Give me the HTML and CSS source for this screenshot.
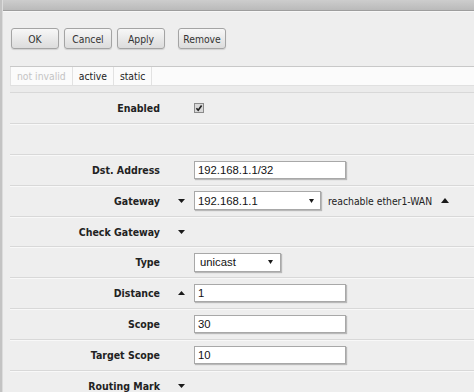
FILE: index.html
```html
<!DOCTYPE html>
<html>
<head>
<meta charset="utf-8">
<link rel="stylesheet" href="styles.css">
</head>
<body>
<div class="frame">
  <div class="edge"></div>
  <div class="main">
    <div class="topbar"></div>
    <div class="toolbar">
      <button class="btn">OK</button>
      <button class="btn">Cancel</button>
      <button class="btn">Apply</button>
      <button class="btn btn-sep">Remove</button>
    </div>
    <div class="form">
      <div class="tabs">
        <span class="tab dim">not invalid</span>
        <span class="tab">active</span>
        <span class="tab">static</span>
      </div>
      <div class="gap"></div>
      <div class="rows">
        <div class="row">
          <div class="label">Enabled</div>
          <div class="ctl"></div>
          <div class="field">
            <span class="checkbox"><svg width="10" height="10" viewBox="0 0 10 10"><rect x="0.5" y="0.5" width="9" height="9" fill="#d8d8d8" stroke="#8a8a8a"/><path d="M2.4 5.2 L4.2 7.2 L7.6 2.6" fill="none" stroke="#1e1e1e" stroke-width="1.6"/></svg></span>
          </div>
        </div>
        <div class="row"></div>
        <div class="row">
          <div class="label">Dst. Address</div>
          <div class="ctl"></div>
          <div class="field"><div class="input">192.168.1.1/32</div></div>
        </div>
        <div class="row">
          <div class="label">Gateway</div>
          <div class="ctl"><svg class="tri" width="7" height="4" viewBox="0 0 7 4"><polygon points="0,0 7,0 3.5,4" fill="#1a1a1a"/></svg></div>
          <div class="field">
            <div class="input select gw"><span>192.168.1.1</span><svg width="5" height="4" viewBox="0 0 5 4"><polygon points="0,0 5,0 2.5,4" fill="#1a1a1a"/></svg></div>
            <span class="status">reachable ether1-WAN</span>
            <svg class="tri up" width="8" height="5" viewBox="0 0 8 5"><polygon points="0,5 8,5 4,0" fill="#1a1a1a"/></svg>
          </div>
        </div>
        <div class="row">
          <div class="label">Check Gateway</div>
          <div class="ctl"><svg class="tri" width="7" height="4" viewBox="0 0 7 4"><polygon points="0,0 7,0 3.5,4" fill="#1a1a1a"/></svg></div>
          <div class="field"></div>
        </div>
        <div class="row">
          <div class="label">Type</div>
          <div class="ctl"></div>
          <div class="field">
            <div class="input select type"><span>unicast</span><svg width="5" height="4" viewBox="0 0 5 4"><polygon points="0,0 5,0 2.5,4" fill="#1a1a1a"/></svg></div>
          </div>
        </div>
        <div class="row">
          <div class="label">Distance</div>
          <div class="ctl"><svg class="tri" width="7" height="4" viewBox="0 0 7 4"><polygon points="0,4 7,4 3.5,0" fill="#1a1a1a"/></svg></div>
          <div class="field"><div class="input">1</div></div>
        </div>
        <div class="row">
          <div class="label">Scope</div>
          <div class="ctl"></div>
          <div class="field"><div class="input">30</div></div>
        </div>
        <div class="row">
          <div class="label">Target Scope</div>
          <div class="ctl"></div>
          <div class="field"><div class="input">10</div></div>
        </div>
        <div class="row">
          <div class="label">Routing Mark</div>
          <div class="ctl"><svg class="tri" width="7" height="4" viewBox="0 0 7 4"><polygon points="0,0 7,0 3.5,4" fill="#1a1a1a"/></svg></div>
          <div class="field"></div>
        </div>
      </div>
    </div>
  </div>
</div>
</body>
</html>
```

FILE: styles.css
```css
html, body {
  margin: 0;
  padding: 0;
}
body {
  width: 474px;
  height: 392px;
  overflow: hidden;
  background: #eeeeee;
  font-family: "DejaVu Sans Condensed", "DejaVu Sans", sans-serif;
  font-size: 10.3px;
  color: #222;
}
.frame {
  display: flex;
  height: 392px;
}
.edge {
  flex: none;
  width: 2px;
  background: #c3c3c3;
  border-right: 1px solid #dcdcdc;
}
.main {
  flex: 1;
  min-width: 0;
  display: flex;
  flex-direction: column;
}
.topbar {
  flex: none;
  height: 10px;
  background: linear-gradient(#cdcdcd, #bababa);
  border-bottom: 1px solid #9d9d9d;
}
.toolbar {
  flex: none;
  display: flex;
  gap: 5px;
  padding: 16px 8px 17px;
  border-top: 1px solid #f7f7f7;
}
.btn {
  width: 48px;
  height: 21px;
  padding: 0;
  border: 1px solid #a4a4a4;
  border-radius: 3px;
  background: linear-gradient(#f7f7f7, #dcdcdc);
  box-shadow: 0 1px 1px rgba(0, 0, 0, 0.12);
  font-family: "DejaVu Sans Condensed", "DejaVu Sans", sans-serif;
  font-size: 10.3px;
  color: #333;
}
.btn-sep {
  margin-left: 8px;
}
.form {
  margin-left: 7px;
}
.tabs {
  display: flex;
  height: 18px;
  background: #fbfbfb;
  border-top: 1px solid #c8c8c8;
  border-bottom: 1px solid #e0e0e0;
}
.tab {
  padding: 0 6px;
  line-height: 18px;
  border-left: 1px solid #e2e2e2;
  color: #222;
}
.tab:last-child {
  border-right: 1px solid #e2e2e2;
}
.tab.dim {
  color: #c4c4c4;
}
.gap {
  height: 6px;
  background: #ebebeb;
}
.rows {
  border-top: 1px solid #d8d8d8;
}
.row {
  display: flex;
  align-items: center;
  height: 29.9px;
  border-bottom: 1px solid #d8d8d8;
  box-shadow: 0 1px 0 #f8f8f8;
}
.label {
  flex: none;
  width: 150px;
  text-align: right;
  font-weight: bold;
  font-size: 10.5px;
  color: #222;
}
.ctl {
  flex: none;
  width: 34px;
  display: flex;
  align-items: center;
}
.tri {
  display: block;
  margin-left: 18px;
}
.field {
  flex: 1;
  display: flex;
  align-items: center;
}
.checkbox {
  display: flex;
}
.input {
  box-sizing: border-box;
  width: 152px;
  height: 18px;
  padding-left: 3px;
  background: #fff;
  border: 1px solid #a8a8a8;
  box-shadow: 1px 1px 1px rgba(0, 0, 0, 0.22);
  font-family: "Liberation Sans", Arial, sans-serif;
  font-size: 11.3px;
  line-height: 16px;
  color: #111;
}
.select {
  display: flex;
  align-items: center;
  justify-content: space-between;
  padding-right: 6px;
}
.select svg {
  display: block;
}
.gw {
  width: 127px;
  height: 19px;
}
.type {
  width: 87px;
  height: 19px;
  padding-left: 5px;
  padding-right: 7px;
}
.status {
  margin-left: 7px;
  color: #222;
}
.tri.up {
  margin-left: 9px;
}
```
